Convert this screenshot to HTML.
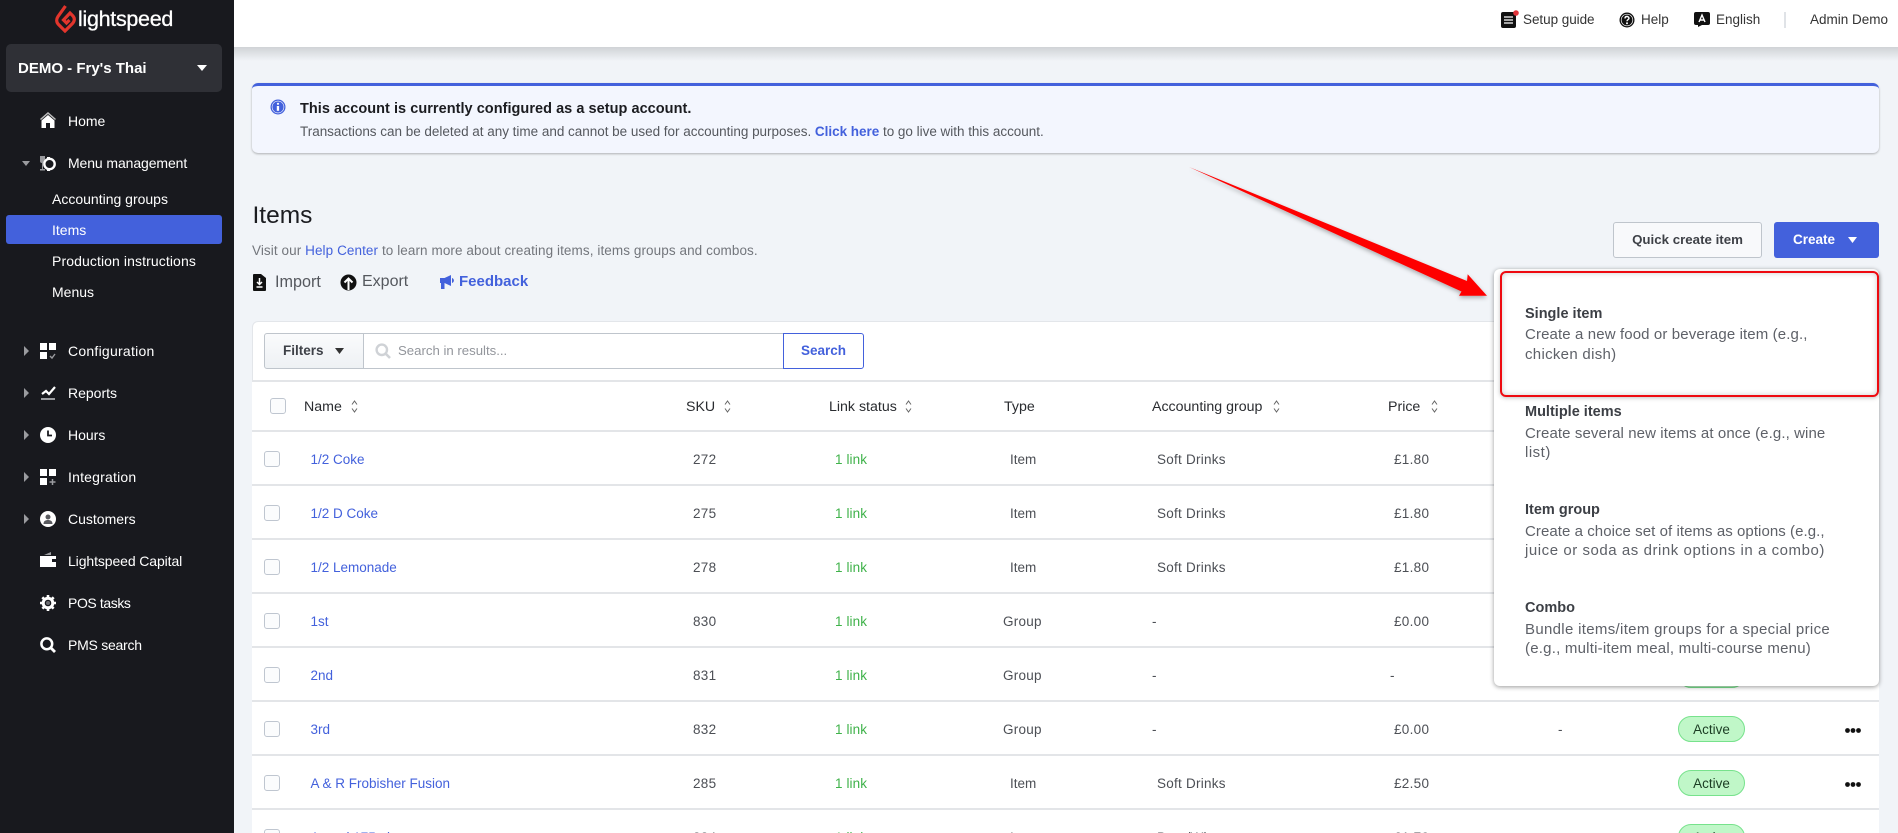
<!DOCTYPE html>
<html lang="en"><head><meta charset="utf-8"><title>Items</title>
<style>
*{box-sizing:border-box}
html,body{margin:0;padding:0;width:1898px;height:833px;overflow:hidden;background:#f1f4f8}
body{position:relative;font-family:"Liberation Sans",Arial,sans-serif;font-size:13.5px;color:#444}
.a{position:absolute}
.t{position:absolute;white-space:nowrap;line-height:20px}
a{color:#4361dc;text-decoration:none}
#side{position:absolute;left:0;top:0;width:234px;height:833px;background:#18191e;color:#fff}
#side .t{font-size:14px;color:#fff}
#top{position:absolute;left:234px;top:0;width:1664px;height:47px;background:#fff}
#topsh{position:absolute;left:234px;top:47px;width:1664px;height:14px;background:linear-gradient(#d0d3d6,#f1f4f8)}
#top .t{font-size:13.5px;color:#333}
.r{position:absolute;left:252px;width:1627px;height:54px;border-bottom:2px solid #e3e5e8;background:#fff}
.cb{position:absolute;left:12px;top:19px;width:16px;height:16px;border:1px solid #bfc6d0;border-radius:3px;background:#fbfcfd}
.r .t{top:18px;color:#4c4f55}
.r .n{left:58.5px;color:#4361dc}
.r .s{left:441px;letter-spacing:.3px}
.r .l{left:583px;color:#3fb24a;letter-spacing:.1px}
.r .ty{left:758px}.r .tg{left:751px;letter-spacing:.25px}
.r .g{left:905px;letter-spacing:.25px}.r .gd{left:900px}
.r .p{left:1142px;letter-spacing:.3px}.r .pd{left:1138px}
.h{color:#2a2c30!important;font-size:14.2px}
.pill{position:absolute;left:1426px;top:14px;width:67px;height:26px;border:1px solid #77e28c;border-radius:13px;background:#c0f7c8;color:#1c3d24;font-size:13.5px;line-height:25px;text-align:center}
.dots{position:absolute;left:1593px;top:26px;width:16px;height:5px}
.d-t{position:absolute;left:1525px;font-size:14.5px;font-weight:700;color:#3c3f45;white-space:nowrap;line-height:20px}
.d-d{position:absolute;left:1525px;font-size:15px;color:#5e6168;white-space:nowrap;line-height:20px}
</style></head><body>

<div id="side">
  <svg class="a" style="left:55px;top:4px" width="22" height="29" viewBox="0 0 22 29"><path d="M10.500 2 3 12.500C1 15.500 1.500 18.500 3.500 20.500L10 27l7-7c3-3 3-6 .5-8.500L15 9l-6.500 7 3 3 3-3" fill="none" stroke="#e2352c" stroke-width="3.200"/></svg>
  <div class="t" style="left:78px;top:6px;font-size:21.5px;line-height:27px;letter-spacing:-.3px;-webkit-text-stroke:.3px #fff">lightspeed</div>

  <div class="a" style="left:6px;top:44px;width:216px;height:48px;background:#2f3036;border-radius:5px"></div>
  <div class="t" style="left:18px;top:59px;font-weight:700;font-size:15px">DEMO - Fry's Thai</div>
  <svg class="a" style="left:197px;top:65px" width="10" height="7"><path d="M0 0h10L5 6z" fill="#fff"/></svg>

  <svg class="a" style="left:40px;top:112px" width="16" height="17" viewBox="0 0 16 17"><path d="M8 0 0 7l1 1 7-6 7 6 1-1z" fill="#bbb"/><path d="M8 3 1.500 8.500V16H6v-5h4v5h4.500V8.500z" fill="#fff"/></svg>
  <div class="t" style="left:68px;top:111px">Home</div>

  <svg class="a" style="left:22px;top:161px" width="9" height="6"><path d="M0 0h8L4 5z" fill="#9a9b9f"/></svg>
  <svg class="a" style="left:40px;top:156px" width="16" height="16" viewBox="0 0 16 16"><path d="M0 0h5v5a2 2 0 0 1-2 2v6h2v1.500H0V13h2V7a2 2 0 0 1-2-2z" fill="#9a9b9f"/><circle cx="9.500" cy="8" r="5.200" fill="none" stroke="#fff" stroke-width="2.400"/><path d="M7 1h3v2H7zM7 13h3v2H7z" fill="#fff"/></svg>
  <div class="t" style="left:68px;top:153px;letter-spacing:-.1px">Menu management</div>

  <div class="t" style="left:52px;top:189px">Accounting groups</div>
  <div class="a" style="left:6px;top:215px;width:216px;height:29px;background:#4361dc;border-radius:3px"></div>
  <div class="t" style="left:52px;top:220px">Items</div>
  <div class="t" style="left:52px;top:251px;letter-spacing:.1px">Production instructions</div>
  <div class="t" style="left:52px;top:282px">Menus</div>

  <svg class="a" style="left:24px;top:346px" width="6" height="10"><path d="M0 0l5 5-5 5z" fill="#9a9b9f"/></svg>
  <svg class="a" style="left:40px;top:343px" width="16" height="17" viewBox="0 0 16 17"><path d="M0 0h7v7H0zM9 0h7v7H9zM0 9h7v7H0z" fill="#fff"/><path d="m10 13 2 2 3-4" fill="none" stroke="#9a9b9f" stroke-width="1.400"/></svg>
  <div class="t" style="left:68px;top:341px;letter-spacing:.25px">Configuration</div>

  <svg class="a" style="left:24px;top:388px" width="6" height="10"><path d="M0 0l5 5-5 5z" fill="#9a9b9f"/></svg>
  <svg class="a" style="left:41px;top:385px" width="15" height="17" viewBox="0 0 15 17"><path d="m1 9 4-3 3 3 6-7" fill="none" stroke="#fff" stroke-width="2.200"/><path d="M0 13h14v2H0z" fill="#9a9b9f"/></svg>
  <div class="t" style="left:68px;top:383px">Reports</div>

  <svg class="a" style="left:24px;top:430px" width="6" height="10"><path d="M0 0l5 5-5 5z" fill="#9a9b9f"/></svg>
  <svg class="a" style="left:40px;top:427px" width="16" height="16" viewBox="0 0 16 16"><circle cx="8" cy="8" r="8" fill="#fff"/><path d="M8 3.500V8.500h4" fill="none" stroke="#18191e" stroke-width="1.800"/></svg>
  <div class="t" style="left:68px;top:425px">Hours</div>

  <svg class="a" style="left:24px;top:472px" width="6" height="10"><path d="M0 0l5 5-5 5z" fill="#9a9b9f"/></svg>
  <svg class="a" style="left:40px;top:469px" width="16" height="17" viewBox="0 0 16 17"><path d="M0 0h7v7H0zM9 0h7v7H9zM0 9h7v7H0z" fill="#fff"/><path d="M12.500 10v6M9.500 13h6" stroke="#9a9b9f" stroke-width="1.500"/></svg>
  <div class="t" style="left:68px;top:467px;letter-spacing:.2px">Integration</div>

  <svg class="a" style="left:24px;top:514px" width="6" height="10"><path d="M0 0l5 5-5 5z" fill="#9a9b9f"/></svg>
  <svg class="a" style="left:40px;top:511px" width="16" height="16" viewBox="0 0 16 16"><circle cx="8" cy="8" r="8" fill="#fff"/><circle cx="8" cy="6" r="2.500" fill="#5a5b60"/><path d="M3.500 13c0-3 2-4 4.500-4s4.500 1 4.500 4z" fill="#5a5b60"/></svg>
  <div class="t" style="left:68px;top:509px">Customers</div>

  <svg class="a" style="left:40px;top:552px" width="16" height="16" viewBox="0 0 16 16"><path d="M4 3 11 0v3z" fill="#9a9b9f"/><path d="M0 4h16v3h-4v3h4v5H0z" fill="#fff"/><circle cx="13" cy="9" r="1" fill="#18191e"/></svg>
  <div class="t" style="left:68px;top:551px;letter-spacing:-.1px">Lightspeed Capital</div>

  <svg class="a" style="left:40px;top:595px" width="16" height="16" viewBox="0 0 16 16"><circle cx="8" cy="8" r="4.800" fill="none" stroke="#fff" stroke-width="3"/><path d="M8 0v16M0 8h16M2.300 2.300l11.400 11.400M13.700 2.300 2.300 13.700" stroke="#fff" stroke-width="2.600" stroke-dasharray="2.600 10.800"/><circle cx="8" cy="8" r="2" fill="#6a6b70"/></svg>
  <div class="t" style="left:68px;top:593px;letter-spacing:-.4px">POS tasks</div>

  <svg class="a" style="left:40px;top:637px" width="16" height="16" viewBox="0 0 16 16"><circle cx="6.800" cy="6.800" r="5.400" fill="none" stroke="#fff" stroke-width="2.500"/><path d="m10.500 10.500 4.500 4.500" stroke="#fff" stroke-width="2.800"/></svg>
  <div class="t" style="left:68px;top:635px;letter-spacing:-.25px">PMS search</div>
</div>

<div id="top">
  <svg class="a" style="left:1267px;top:10px" width="19" height="19" viewBox="0 0 19 19"><rect x="0" y="2" width="15" height="16" rx="2" fill="#111"/><path d="M3 7h9M3 10h9M3 13h9" stroke="#fff" stroke-width="1.200"/><circle cx="15" cy="3" r="2.800" fill="#e0343a"/></svg>
  <div class="t" style="left:1289px;top:10px;letter-spacing:-.05px">Setup guide</div>
  <svg class="a" style="left:1385px;top:12px" width="16" height="16" viewBox="0 0 16 16"><circle cx="8" cy="8" r="7.500" fill="#111"/><circle cx="8" cy="8" r="5.800" fill="none" stroke="#fff" stroke-width=".7"/><path d="M6 6.500C6 5 7 4.500 8 4.500S10 5.200 10 6.300C10 7.600 8 7.600 8 9.200" fill="none" stroke="#fff" stroke-width="1.400"/><circle cx="8" cy="11.300" r="1" fill="#fff"/></svg>
  <div class="t" style="left:1407px;top:10px">Help</div>
  <svg class="a" style="left:1460px;top:11px" width="16" height="17" viewBox="0 0 16 17"><path d="M2 1h12a2 2 0 0 1 2 2v9a2 2 0 0 1-2 2H8l-4 2v-2H2a2 2 0 0 1-2-2V3a2 2 0 0 1 2-2z" fill="#111"/><path d="m5 11 3-7 3 7M6 9h4" fill="none" stroke="#fff" stroke-width="1.400"/></svg>
  <div class="t" style="left:1482px;top:10px">English</div>
  <div class="a" style="left:1550px;top:12px;width:2px;height:16px;background:#e0e3e7"></div>
  <div class="t" style="left:1576px;top:10px">Admin Demo</div>
</div>
<div id="topsh"></div>

<div class="a" style="left:252px;top:83px;width:1627px;height:70px;background:#f3f6fe;border-top:3px solid #4361dc;border-radius:6px;box-shadow:0 1px 2px rgba(0,0,0,.28)"></div>
<svg class="a" style="left:270px;top:99px" width="16" height="16" viewBox="0 0 16 16"><circle cx="8" cy="8" r="7.500" fill="#4361dc"/><circle cx="8" cy="8" r="5.900" fill="none" stroke="#fff" stroke-width=".6"/><circle cx="8" cy="4.800" r="1.100" fill="#fff"/><path d="M6.800 7h2.300v4.800H6.800z" fill="#fff"/></svg>
<div class="t" style="left:300px;top:99px;font-size:14.5px;font-weight:700;color:#1b1c20;letter-spacing:.04px">This account is currently configured as a setup account.</div>
<div class="t" style="left:300px;top:122px;font-size:13.5px;color:#55585e;letter-spacing:-.02px">Transactions can be deleted at any time and cannot be used for accounting purposes. <a style="font-weight:700">Click here</a> to go live with this account.</div>

<div class="t" style="left:252.500px;top:204px;font-size:24.500px;line-height:24px;color:#1b1c20">Items</div>
<div class="t" style="left:252px;top:241px;font-size:13.5px;color:#73767c;letter-spacing:.085px">Visit our <a>Help Center</a> to learn more about creating items, items groups and combos.</div>

<svg class="a" style="left:252px;top:274px" width="15" height="17" viewBox="0 0 15 17"><path d="M2 0h7l5 4v12a1 1 0 0 1-1 1H2a1 1 0 0 1-1-1V1a1 1 0 0 1 1-1z" fill="#111"/><path d="M7.500 4v6M5 8l2.500 2.500L10 8M4.500 13h6" fill="none" stroke="#fff" stroke-width="1.500"/></svg>
<div class="t" style="left:275px;top:272px;font-size:16.200px;color:#55585e">Import</div>
<svg class="a" style="left:340px;top:274px" width="17" height="17" viewBox="0 0 17 17"><circle cx="8.500" cy="8.500" r="8" fill="#111"/><path d="M8.500 16V5M4.500 8.500l4-4 4 4" fill="none" stroke="#fff" stroke-width="2"/></svg>
<div class="t" style="left:362px;top:272px;font-size:16px;color:#55585e">Export</div>
<svg class="a" style="left:440px;top:275px" width="16" height="15" viewBox="0 0 16 15"><path d="M0 3h4.500L11 0v11L4.500 8v6H1V8H0z" fill="#4361dc"/><path d="M12 3c2.500 .8 2.500 4.200 0 5z" fill="#4361dc"/></svg>
<div class="t" style="left:459px;top:272px;font-size:15px;font-weight:700;color:#4361dc">Feedback</div>

<div class="a" style="left:1613px;top:222px;width:149px;height:36px;background:#f8f9fb;border:1px solid #bfc5cc;border-radius:3px;text-align:center;line-height:34px;font-weight:700;font-size:13.3px;color:#3e4147">Quick create item</div>
<div class="a" style="left:1774px;top:222px;width:105px;height:36px;background:#4361dc;border-radius:3px"></div>
<div class="t" style="left:1793px;top:230px;font-weight:700;color:#fff;font-size:13.5px">Create</div>
<svg class="a" style="left:1848px;top:237px" width="9" height="7"><path d="M0 0h9L4.500 6z" fill="#fff"/></svg>

<div class="a" style="left:252px;top:321px;width:1627px;height:520px;background:#fff;border:1px solid #e3e6ea;border-radius:6px 6px 0 0"></div>
<div class="a" style="left:264px;top:333px;width:100px;height:36px;background:linear-gradient(#fafbfc,#eef1f4);border:1px solid #bfc5cc;border-radius:3px 0 0 3px"></div>
<div class="t" style="left:283px;top:341px;font-weight:700;color:#3e4147;font-size:13.5px">Filters</div>
<svg class="a" style="left:335px;top:348px" width="9" height="7"><path d="M0 0h9L4.500 6z" fill="#333"/></svg>
<div class="a" style="left:363px;top:333px;width:421px;height:36px;background:#fff;border:1px solid #bfc5cc;border-left:1px solid #bfc5cc"></div>
<svg class="a" style="left:375px;top:343px" width="16" height="16" viewBox="0 0 16 16"><circle cx="6.800" cy="6.800" r="5.200" fill="none" stroke="#cfd2d6" stroke-width="2.400"/><path d="m10.500 10.500 4.500 4.500" stroke="#cfd2d6" stroke-width="2.600"/></svg>
<div class="t" style="left:398px;top:341px;color:#93969c;font-size:13.200px">Search in results...</div>
<div class="a" style="left:783px;top:333px;width:81px;height:36px;background:#fff;border:1px solid #4361dc;border-radius:0 3px 3px 0;text-align:center;line-height:34px;font-weight:700;color:#4361dc;font-size:13.5px">Search</div>
<div class="a" style="left:252px;top:380px;width:1627px;height:2px;background:#e3e5e8"></div>

<div class="a" style="left:252px;top:382px;width:1627px;height:50px;background:#fff;border-bottom:2px solid #e3e5e8"></div>
<div class="cb" style="left:270px;top:398px"></div>
<div class="t h" style="left:304px;top:397px">Name</div>
<svg class="a" style="left:351px;top:400px" width="7" height="13"><path d="M1 4.500 3.500 1 6 4.500M1 8.500 3.500 12 6 8.500" fill="none" stroke="#666" stroke-width="1"/></svg>
<div class="t h" style="left:686px;top:397px">SKU</div>
<svg class="a" style="left:724px;top:400px" width="7" height="13"><path d="M1 4.500 3.500 1 6 4.500M1 8.500 3.500 12 6 8.500" fill="none" stroke="#666" stroke-width="1"/></svg>
<div class="t h" style="left:829px;top:397px">Link status</div>
<svg class="a" style="left:905px;top:400px" width="7" height="13"><path d="M1 4.500 3.500 1 6 4.500M1 8.500 3.500 12 6 8.500" fill="none" stroke="#666" stroke-width="1"/></svg>
<div class="t h" style="left:1004px;top:397px">Type</div>
<div class="t h" style="left:1152px;top:397px">Accounting group</div>
<svg class="a" style="left:1273px;top:400px" width="7" height="13"><path d="M1 4.500 3.500 1 6 4.500M1 8.500 3.500 12 6 8.500" fill="none" stroke="#666" stroke-width="1"/></svg>
<div class="t h" style="left:1388px;top:397px">Price</div>
<svg class="a" style="left:1431px;top:400px" width="7" height="13"><path d="M1 4.500 3.500 1 6 4.500M1 8.500 3.500 12 6 8.500" fill="none" stroke="#666" stroke-width="1"/></svg>

<div class="r" style="top:432px"><div class="cb"></div><div class="t n">1/2 Coke</div><div class="t s">272</div><div class="t l">1 link</div><div class="t ty">Item</div><div class="t g">Soft Drinks</div><div class="t p">£1.80</div></div>
<div class="r" style="top:486px"><div class="cb"></div><div class="t n">1/2 D Coke</div><div class="t s">275</div><div class="t l">1 link</div><div class="t ty">Item</div><div class="t g">Soft Drinks</div><div class="t p">£1.80</div></div>
<div class="r" style="top:540px"><div class="cb"></div><div class="t n">1/2 Lemonade</div><div class="t s">278</div><div class="t l">1 link</div><div class="t ty">Item</div><div class="t g">Soft Drinks</div><div class="t p">£1.80</div></div>
<div class="r" style="top:594px"><div class="cb"></div><div class="t n">1st</div><div class="t s">830</div><div class="t l">1 link</div><div class="t tg">Group</div><div class="t gd">-</div><div class="t p">£0.00</div></div>
<div class="r" style="top:648px"><div class="cb"></div><div class="t n">2nd</div><div class="t s">831</div><div class="t l">1 link</div><div class="t tg">Group</div><div class="t gd">-</div><div class="t pd">-</div><div class="pill">Active</div></div>
<div class="r" style="top:702px"><div class="cb"></div><div class="t n">3rd</div><div class="t s">832</div><div class="t l">1 link</div><div class="t tg">Group</div><div class="t gd">-</div><div class="t p">£0.00</div><div class="t" style="left:1306px">-</div><div class="pill">Active</div><svg class="dots"><circle cx="2.500" cy="2.500" r="2.400" fill="#111"/><circle cx="8" cy="2.500" r="2.400" fill="#111"/><circle cx="13.500" cy="2.500" r="2.400" fill="#111"/></svg></div>
<div class="r" style="top:756px"><div class="cb"></div><div class="t n">A &amp; R Frobisher Fusion</div><div class="t s">285</div><div class="t l">1 link</div><div class="t ty">Item</div><div class="t g">Soft Drinks</div><div class="t p">£2.50</div><div class="pill">Active</div><svg class="dots"><circle cx="2.500" cy="2.500" r="2.400" fill="#111"/><circle cx="8" cy="2.500" r="2.400" fill="#111"/><circle cx="13.500" cy="2.500" r="2.400" fill="#111"/></svg></div>
<div class="r" style="top:810px"><div class="cb"></div><div class="t n">Aperol 175ml</div><div class="t s">884</div><div class="t l">1 link</div><div class="t ty">Item</div><div class="t g">Beer/Wine</div><div class="t p">£1.70</div><div class="pill">Active</div></div>

<div class="a" style="left:1494px;top:269px;width:385px;height:417px;background:#fff;border-radius:6px;box-shadow:0 1px 5px rgba(0,0,0,.4)"></div>
<div class="d-t" style="top:304px">Single item</div>
<div class="d-d" style="top:325px;letter-spacing:.12px">Create a new food or beverage item (e.g.,</div>
<div class="d-d" style="top:345px;letter-spacing:.3px">chicken dish)</div>
<div class="d-t" style="top:402px">Multiple items</div>
<div class="d-d" style="top:424px;letter-spacing:.1px">Create several new items at once (e.g., wine</div>
<div class="d-d" style="top:443px;letter-spacing:.5px">list)</div>
<div class="d-t" style="top:500px">Item group</div>
<div class="d-d" style="top:522px;letter-spacing:.06px">Create a choice set of items as options (e.g.,</div>
<div class="d-d" style="top:541px;letter-spacing:.55px">juice or soda as drink options in a combo)</div>
<div class="d-t" style="top:598px">Combo</div>
<div class="d-d" style="top:620px;letter-spacing:.32px">Bundle items/item groups for a special price</div>
<div class="d-d" style="top:639px;letter-spacing:.22px">(e.g., multi-item meal, multi-course menu)</div>

<div class="a" style="left:1500px;top:271px;width:379px;height:126px;border:2px solid #ee0a10;border-radius:6px;box-shadow:inset 0 0 6px rgba(0,0,0,.2),0 1px 4px rgba(0,0,0,.25)"></div>

<svg class="a" style="left:0;top:0;pointer-events:none" width="1898" height="833">
  <defs><filter id="s" x="-5%" y="-5%" width="110%" height="115%"><feDropShadow dx="0" dy="2" stdDeviation="2" flood-color="#000" flood-opacity=".3"/></filter></defs>
  <path d="M1189 167 1467 281 1467.700 274.300 1487 295.700 1459 295.700 1461.500 291.500z" fill="#fe0000" filter="url(#s)"/>
</svg>
</body></html>
